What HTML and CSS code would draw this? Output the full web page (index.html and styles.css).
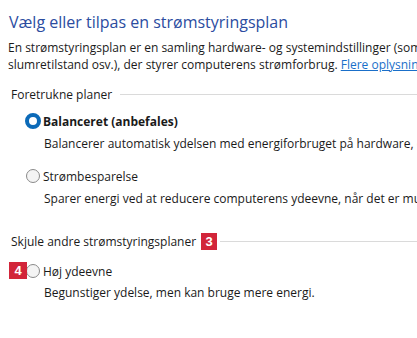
FILE: index.html
```html
<!DOCTYPE html>
<html lang="da">
<head>
<meta charset="utf-8">
<link rel="stylesheet" href="styles.css">
</head>
<body>
<div class="page">
  <h1 class="title">Vælg eller tilpas en strømstyringsplan</h1>
  <p class="intro">En strømstyringsplan er en samling hardware- og systemindstillinger (som f.eks. skærmens lysstyrke,<br>slumretilstand osv.), der styrer computerens strømforbrug. <a href="#" class="link">Flere oplysninger om strømstyringsplaner</a></p>

  <div class="group-head"><span>Foretrukne planer</span><span class="rule"></span></div>

  <div class="plan">
    <div class="plan-row"><span class="radio checked"></span><span class="plan-name bold">Balanceret (anbefales)</span></div>
    <div class="plan-desc">Balancerer automatisk ydelsen med energiforbruget på hardware, der understøtter det.</div>
  </div>

  <div class="plan">
    <div class="plan-row"><span class="radio"></span><span class="plan-name">Strømbesparelse</span></div>
    <div class="plan-desc">Sparer energi ved at reducere computerens ydeevne, når det er muligt.</div>
  </div>

  <div class="group-head group-hide"><span>Skjule andre strømstyringsplaner</span><span class="badge b3">3</span><span class="rule"></span></div>

  <div class="plan plan-last">
    <div class="plan-row"><span class="radio-wrap"><span class="radio"></span><span class="badge b4">4</span></span><span class="plan-name">Høj ydeevne</span></div>
    <div class="plan-desc">Begunstiger ydelse, men kan bruge mere energi.</div>
  </div>
</div>
</body>
</html>
```
FILE: styles.css
```css
html, body {
  margin: 0;
  padding: 0;
  background: #ffffff;
  overflow: hidden;
}
body {
  width: 417px;
  height: 338px;
  font-family: "Open Sans", "Noto Sans", sans-serif;
  font-size: 12px;
  color: #1a1a1a;
  white-space: nowrap;
}
.page {
  padding: 11px 0 0 9px;
}
.title {
  margin: 0;
  font-weight: normal;
  font-size: 16px;
  line-height: 22px;
  color: #2b4c9f;
}
.intro {
  margin: 6px 0 0 -1px;
  line-height: 17px;
}
.link {
  color: #1a6fc9;
  text-decoration: underline;
}
.group-head {
  display: flex;
  align-items: center;
  margin-top: 13px;
  margin-left: 2px;
  height: 17px;
  line-height: 17px;
}
.rule {
  flex: 1;
  height: 1px;
  background: #dadada;
  margin-left: 8px;
}
.plan {
  margin-left: 17px;
  margin-top: 9px;
}
.plan + .plan { margin-top: 15px; }
.plan-row {
  display: flex;
  align-items: center;
  height: 18px;
}
.radio {
  width: 14px;
  height: 14px;
  border: 1px solid #8a8a8a;
  border-radius: 50%;
  box-sizing: border-box;
  background: #f4f4f4;
  margin-right: 3px;
  flex: none;
}
.radio.checked {
  border: 4px solid #0c6ab8;
  background: #fff;
  width: 16px;
  height: 16px;
  margin-left: -1px;
  margin-right: 2px;
}
.bold { font-weight: bold; }
.plan-desc {
  margin-left: 18px;
  margin-top: 5px;
  line-height: 17px;
}
.group-hide { margin-top: 26px; }
.badge {
  display: inline-flex;
  align-items: center;
  justify-content: center;
  background: #d2253a;
  color: #fff;
  font-weight: bold;
  font-size: 13px;
  width: 16px;
  height: 17px;
  line-height: 17px;
  font-family: "Liberation Sans", Arial, sans-serif;
}
.b3 { margin-left: 5px; }
.group-hide .rule { margin-left: 3px; }
.plan-last { margin-top: 12px; }
.plan-last .plan-desc { margin-top: 4px; }
.radio-wrap {
  position: relative;
  display: inline-flex;
}
.b4 {
  position: absolute;
  left: -17px;
  top: -2px;
  width: 18px;
}
```
